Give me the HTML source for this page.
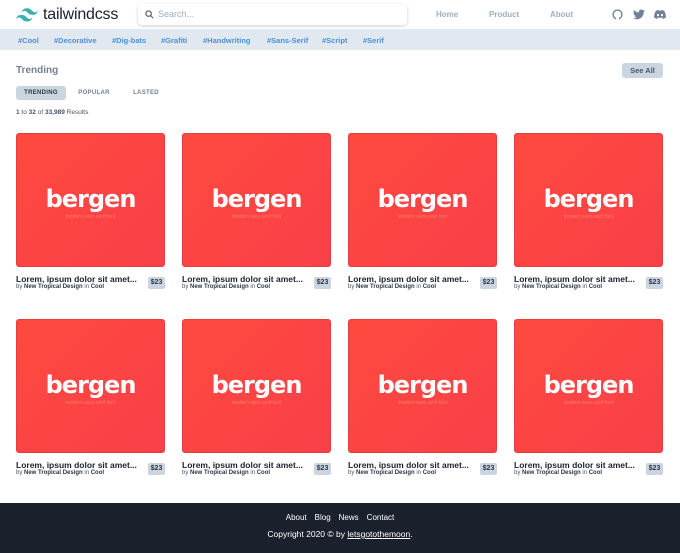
<!DOCTYPE html>
<html><head><meta charset="utf-8"><style>
*{margin:0;padding:0;box-sizing:border-box}
body{width:680px;height:553px;overflow:hidden;font-family:"Liberation Sans","DejaVu Sans",sans-serif;background:#fff;position:relative}
.hdr{position:absolute;top:0;left:0;width:680px;height:29px;background:#fff}
.logo{position:absolute;left:16px;top:6px;display:flex;align-items:center}
.logo span{font-size:16px;color:#1a202c;margin-left:5px;letter-spacing:-0.2px}
.search{position:absolute;left:138px;top:4px;width:269px;height:21px;border-radius:4px;box-shadow:0 1px 3px rgba(0,0,0,.2);background:#fff}
.search span{position:absolute;left:20px;top:5px;font-size:9px;color:#a0aec0}
.nav{position:absolute;top:10px;font-size:8px;font-weight:bold;color:#a0aec0}
.tags{position:absolute;top:29px;left:0;width:680px;height:21px;background:#e2e8f0}
.tags span{position:absolute;top:7px;font-size:7.5px;font-weight:bold;color:#4a90d9}
.title{position:absolute;left:16px;top:65px;font-size:10px;font-weight:bold;color:#718096}
.seeall{position:absolute;left:622px;top:63px;width:41px;height:15px;background:#cbd5e0;border-radius:3px;font-size:7.5px;font-weight:bold;color:#4a5568;text-align:center;line-height:15px}
.tab{position:absolute;top:86px;height:14px;font-size:6px;font-weight:bold;color:#718096;line-height:14px;text-align:center;letter-spacing:.3px}
.res{position:absolute;left:16px;top:109px;font-size:6.5px;color:#4a5568}
.card{position:absolute;width:149px}
.img{width:149px;height:134px;border-radius:3px;background:linear-gradient(135deg,#fd4a3e,#fc4345 60%,#f84048);border:1px solid #e53e3e;position:relative}
.img b{position:absolute;left:0;right:0;top:51px;text-align:center;color:#fff;font-size:24px;font-family:"DejaVu Sans","Liberation Sans",sans-serif;font-weight:bold;letter-spacing:-1px}
.img i{position:absolute;left:0;right:0;top:80px;text-align:center;color:#ff7a72;font-size:5px;font-style:normal}
.ct{position:absolute;left:0;top:141px;font-size:8.5px;font-weight:bold;color:#1a202c;white-space:nowrap}
.cb{position:absolute;left:0;top:151px;font-size:6px;color:#4a5568}
.cb b{color:#2d3748}
.price{position:absolute;left:132px;top:144px;width:17px;height:12px;background:#cbd5e0;border-radius:2px;font-size:7px;font-weight:bold;color:#2d3748;text-align:center;line-height:12px}
.foot{position:absolute;left:0;top:503px;width:680px;height:50px;background:#1a202c;color:#fff;text-align:center}
.foot .l{position:absolute;top:10px;width:100%;font-size:8px}
.foot .l span{margin:0 4px}
.foot .c{position:absolute;top:26px;width:100%;font-size:8.5px}
</style></head><body>
<div class="hdr">
 <div class="logo"><svg width="22" height="14" viewBox="0 0 54 33"><path fill="#38b2ac" d="M27 0c-7.2 0-11.7 3.6-13.5 10.8 2.7-3.6 5.850-4.95 9.45-4.05 2.05.51 3.520 2 5.15 3.66C30.75 13.09 33.8 16.2 40.5 16.2c7.2 0 11.7-3.6 13.5-10.8-2.7 3.6-5.850 4.95-9.45 4.05-2.05-.51-3.52-2-5.15-3.66C36.75 3.11 33.7 0 27 0zM13.5 16.2C6.3 16.2 1.8 19.8 0 27c2.7-3.6 5.85-4.95 9.45-4.05 2.05.51 3.52 2 5.15 3.66 2.65 2.69 5.7 5.8 12.4 5.8 7.2 0 11.7-3.6 13.5-10.8-2.7 3.6-5.85 4.95-9.45 4.050-2.05-.51-3.52-2-5.15-3.66C23.25 19.3 20.2 16.2 13.5 16.2z"/></svg><span>tailwindcss</span></div>
 <div class="search"><svg style="position:absolute;left:7px;top:6px" width="9" height="9" viewBox="0 0 10 10"><circle cx="4" cy="4" r="3" fill="none" stroke="#4a5568" stroke-width="1.2"/><path d="M6.3 6.3L9 9" stroke="#4a5568" stroke-width="1.2"/></svg><span>Search...</span></div>
 <span class="nav" style="left:436px">Home</span><span class="nav" style="left:489px">Product</span><span class="nav" style="left:550px">About</span>
 <svg style="position:absolute;left:612px;top:9px" width="11" height="11" viewBox="0 0 16 16"><circle cx="8" cy="8" r="6.5" fill="none" stroke="#718096" stroke-width="2"/><rect x="6" y="10" width="4" height="6" fill="#fff"/></svg>
 <svg style="position:absolute;left:633px;top:9px" width="12" height="11" viewBox="0 0 24 20"><path fill="#718096" d="M24 2.4a10 10 0 01-2.8.8A5 5 0 0023.3.4a10 10 0 01-3.1 1.2A4.9 4.9 0 0011.8 6 14 14 0 011.7.9a4.9 4.9 0 001.5 6.6A5 5 0 011 6.9a4.9 4.9 0 004 4.9 5 5 0 01-2.2.1 4.9 4.9 0 004.6 3.4A9.9 9.9 0 010 17.3 14 14 0 007.5 19.5c9 0 14-7.5 14-14v-.6A10 10 0 0024 2.4z"/></svg>
 <svg style="position:absolute;left:654px;top:10px" width="12" height="9" viewBox="0 0 24 18"><path fill="#718096" d="M20 1.5A20 20 0 0015 0l-.7 1.3a18 18 0 00-4.6 0L9 0a20 20 0 00-5 1.5C.9 6.2 0 10.8.4 15.3A20 20 0 006.5 18l1.3-2a13 13 0 01-2-1l.5-.4a14 14 0 0011.4 0l.5.4a13 13 0 01-2 1l1.3 2a20 20 0 006.1-2.7C24 10 22.9 5.4 20 1.5zM8 12.5c-1.2 0-2.2-1.100-2.2-2.4S6.8 7.7 8 7.7s2.2 1.1 2.2 2.4-1 2.4-2.2 2.4zm8 0c-1.2 0-2.2-1.1-2.2-2.4s1-2.4 2.2-2.4 2.2 1.1 2.2 2.4-1 2.4-2.2 2.4z"/></svg>
</div>
<div class="tags"><span style="left:18px">#Cool</span><span style="left:54px">#Decorative</span><span style="left:112px">#Dig-bats</span><span style="left:161px">#Grafiti</span><span style="left:203px">#Handwriting</span><span style="left:267px">#Sans-Serif</span><span style="left:322px">#Script</span><span style="left:363px">#Serif</span></div>
<div class="title">Trending</div>
<div class="seeall">See All</div>
<div class="tab" style="left:16px;width:50px;background:#cbd5e0;border-radius:3px;color:#2d3748">TRENDING</div>
<div class="tab" style="left:72px;width:44px">POPULAR</div>
<div class="tab" style="left:124px;width:44px">LASTED</div>
<div class="res"><b>1</b> to <b>32</b> of <b>33,989</b> Results</div>

<div class="card" style="left:16px;top:133px"><div class="img"><b>bergen</b><i>modern sans serif font</i></div><div class="ct">Lorem, ipsum dolor sit amet...</div><div class="cb">by <b>New Tropical Design</b> in <b>Cool</b></div><div class="price">$23</div></div>
<div class="card" style="left:182px;top:133px"><div class="img"><b>bergen</b><i>modern sans serif font</i></div><div class="ct">Lorem, ipsum dolor sit amet...</div><div class="cb">by <b>New Tropical Design</b> in <b>Cool</b></div><div class="price">$23</div></div>
<div class="card" style="left:348px;top:133px"><div class="img"><b>bergen</b><i>modern sans serif font</i></div><div class="ct">Lorem, ipsum dolor sit amet...</div><div class="cb">by <b>New Tropical Design</b> in <b>Cool</b></div><div class="price">$23</div></div>
<div class="card" style="left:514px;top:133px"><div class="img"><b>bergen</b><i>modern sans serif font</i></div><div class="ct">Lorem, ipsum dolor sit amet...</div><div class="cb">by <b>New Tropical Design</b> in <b>Cool</b></div><div class="price">$23</div></div>
<div class="card" style="left:16px;top:319px"><div class="img"><b>bergen</b><i>modern sans serif font</i></div><div class="ct">Lorem, ipsum dolor sit amet...</div><div class="cb">by <b>New Tropical Design</b> in <b>Cool</b></div><div class="price">$23</div></div>
<div class="card" style="left:182px;top:319px"><div class="img"><b>bergen</b><i>modern sans serif font</i></div><div class="ct">Lorem, ipsum dolor sit amet...</div><div class="cb">by <b>New Tropical Design</b> in <b>Cool</b></div><div class="price">$23</div></div>
<div class="card" style="left:348px;top:319px"><div class="img"><b>bergen</b><i>modern sans serif font</i></div><div class="ct">Lorem, ipsum dolor sit amet...</div><div class="cb">by <b>New Tropical Design</b> in <b>Cool</b></div><div class="price">$23</div></div>
<div class="card" style="left:514px;top:319px"><div class="img"><b>bergen</b><i>modern sans serif font</i></div><div class="ct">Lorem, ipsum dolor sit amet...</div><div class="cb">by <b>New Tropical Design</b> in <b>Cool</b></div><div class="price">$23</div></div>

<div class="foot"><div class="l"><span>About</span><span>Blog</span><span>News</span><span>Contact</span></div><div class="c">Copyright 2020 © by <u>letsgotothemoon</u>.</div></div>
</body></html>
